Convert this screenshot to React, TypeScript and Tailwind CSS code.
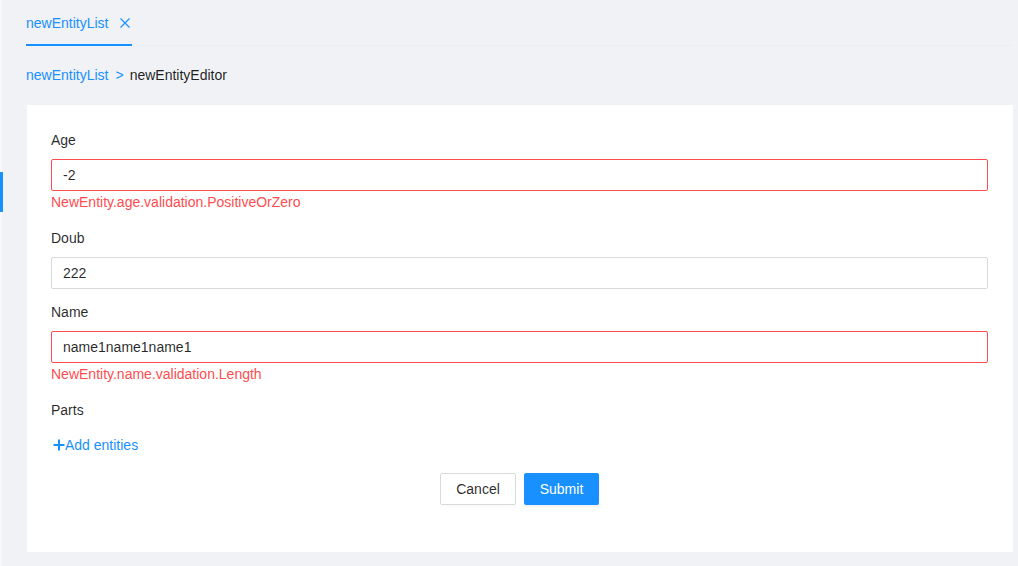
import React from "react";

export default function App() {
  return (
    <div
      className="relative w-[1018px] h-[566px] overflow-hidden bg-[#f0f2f5] text-[14px] text-[rgba(0,0,0,0.85)]"
      style={{ fontFamily: '"Liberation Sans", Arial, sans-serif' }}
    >
      {/* left edge strip */}
      <div className="absolute left-0 top-0 w-[2px] h-full bg-[#f7f8fa]" />
      <div className="absolute left-0 top-[172px] w-[3px] h-[40px] bg-[#1890ff]" />

      <div className="pl-[26px] pr-[6px]">
        {/* tab bar */}
        <div className="h-[46px] flex items-end border-b border-[#ebedf0]">
          <div className="relative h-[46px] flex items-center pt-[2px] pr-[2px]">
            <span className="text-[#1890ff] leading-[22px]">newEntityList</span>
            <span className="ml-[12px] text-[#1890ff]">
              <svg width="10" height="10" viewBox="0 0 10 10" className="block">
                <path d="M0.5 0.5 L9.5 9.5 M9.5 0.5 L0.5 9.5" stroke="#1890ff" strokeWidth="1.2" fill="none" />
              </svg>
            </span>
            <div className="absolute left-0 right-0 -bottom-[1px] h-[2px] bg-[#1890ff]" />
          </div>
        </div>

        {/* breadcrumb */}
        <div className="h-[59px] flex items-center pb-[1px]">
          <span className="text-[#1890ff]">newEntityList</span>
          <span className="ml-[7px] mr-[6px] text-[#1890ff]">&gt;</span>
          <span className="text-[rgba(0,0,0,0.88)]">newEntityEditor</span>
        </div>

        {/* card */}
        <div className="ml-[1px] w-[986px] h-[447px] bg-white px-[24px] pt-[24px]">
          <div className="w-[937px]">
            {/* Age */}
            <div className="pb-[8px] leading-[22px]">Age</div>
            <div className="h-[32px] border border-[#ff4d4f] rounded-[2px] px-[11px] flex items-center">-2</div>
            <div className="h-[24px] leading-[22px] text-[#ff4d4f]">NewEntity.age.validation.PositiveOrZero</div>
            <div className="h-[12px]" />

            {/* Doub */}
            <div className="pb-[8px] leading-[22px]">Doub</div>
            <div className="h-[32px] border border-[#d9d9d9] rounded-[2px] px-[11px] flex items-center">222</div>
            <div className="h-[12px]" />

            {/* Name */}
            <div className="pb-[8px] leading-[22px]">Name</div>
            <div className="h-[32px] border border-[#ff4d4f] rounded-[2px] px-[11px] flex items-center">name1name1name1</div>
            <div className="h-[24px] leading-[22px] text-[#ff4d4f]">NewEntity.name.validation.Length</div>
            <div className="h-[12px]" />

            {/* Parts */}
            <div className="pb-[8px] leading-[22px]">Parts</div>
            <div className="h-[32px] flex items-center text-[#1890ff] pl-[2px]">
              <svg width="12" height="12" viewBox="0 0 12 12" className="block">
                <path d="M6 0.5 V11.5 M0.5 6 H11.5" stroke="#1890ff" strokeWidth="2" fill="none" />
              </svg>
              <span>Add entities</span>
            </div>
            <div className="h-[12px]" />

            {/* buttons */}
            <div className="flex justify-center gap-[8px]">
              <button className="h-[32px] w-[76px] border border-[#d9d9d9] rounded-[2px] bg-white text-[rgba(0,0,0,0.85)] shadow-[0_2px_0_rgba(0,0,0,0.015)]">
                Cancel
              </button>
              <button className="h-[32px] w-[75px] rounded-[2px] bg-[#1890ff] text-white shadow-[0_2px_0_rgba(0,0,0,0.045)]">
                Submit
              </button>
            </div>
          </div>
        </div>
      </div>
    </div>
  );
}
